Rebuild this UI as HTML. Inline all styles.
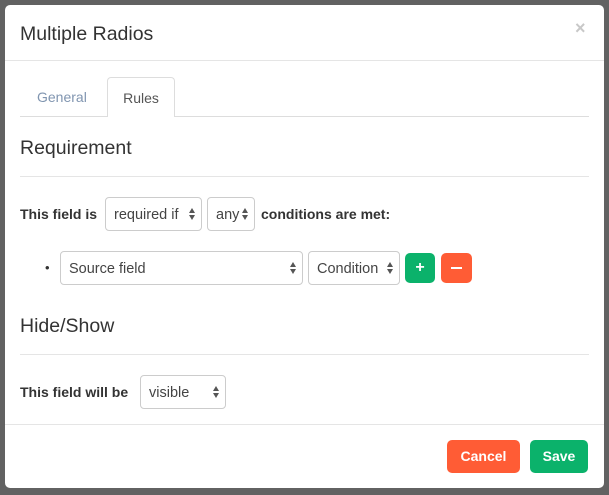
<!DOCTYPE html>
<html><head><style>
body{margin:0;width:609px;height:495px;background:#626262;font-family:"Liberation Sans",sans-serif;position:relative;overflow:hidden;color:#333}
.m{position:absolute;left:5px;top:5px;width:599px;height:483px;background:#fff;border-radius:5px}
.a{position:absolute;white-space:nowrap}
.hr{position:absolute;height:1px;background:#e5e5e5}
.sel{position:absolute;border:1px solid #ccc;border-radius:4px;box-sizing:border-box;font-size:14.5px;color:#444;padding-left:8px;line-height:34px;white-space:nowrap}
.sel:after{content:"";position:absolute;right:6px;top:10px;border:3.5px solid transparent;border-bottom:5px solid #555;border-top:0}
.sel:before{content:"";position:absolute;right:6px;top:17px;border:3.5px solid transparent;border-top:5px solid #555;border-bottom:0}
b{font-size:14px;color:#333}
.h{font-size:19.5px;color:#333}
.btn{position:absolute;border-radius:5px;color:#fff;font-weight:bold;font-size:14px;text-align:center;line-height:32px}
</style></head><body>
<div class="m">
<div class="a h" style="left:15px;top:18px">Multiple Radios</div>
<div class="a" style="left:570px;top:13px;font-size:18px;color:#c8c8c8;font-weight:bold">×</div>
<div class="hr" style="left:0;right:0;top:55px"></div>
<div class="hr" style="left:15px;right:15px;top:111px;background:#ddd"></div>
<div class="a" style="left:32px;top:84px;font-size:14px;color:#8095b0">General</div>
<div class="a" style="left:102px;top:72px;width:68px;height:40px;border:1px solid #ddd;border-bottom:none;border-radius:4px 4px 0 0;background:#fff;box-sizing:border-box;font-size:14px;color:#555;text-align:center;line-height:40px">Rules</div>
<div class="a h" style="left:15px;top:132px">Requirement</div>
<div class="hr" style="left:15px;right:15px;top:171px"></div>
<b class="a" style="left:15px;top:201px">This field is</b>
<div class="sel" style="left:100px;top:192px;width:97px;height:34px">required if</div>
<div class="sel" style="left:202px;top:192px;width:48px;height:34px">any</div>
<b class="a" style="left:256px;top:201px">conditions are met:</b>
<div class="a" style="left:40px;top:255px;font-size:13px">•</div>
<div class="sel" style="left:55px;top:246px;width:243px;height:34px">Source field</div>
<div class="sel" style="left:303px;top:246px;width:92px;height:34px">Condition</div>
<div class="btn" style="left:400px;top:248px;width:30px;height:30px;background:#0bb26b;line-height:29px;font-size:16px">+</div>
<div class="btn" style="left:436px;top:248px;width:31px;height:30px;background:#ff5c35"><div style="position:absolute;left:10px;top:14px;width:11px;height:2px;background:#fff"></div></div>
<div class="a h" style="left:15px;top:310px">Hide/Show</div>
<div class="hr" style="left:15px;right:15px;top:349px"></div>
<b class="a" style="left:15px;top:379px">This field will be</b>
<div class="sel" style="left:135px;top:370px;width:86px;height:34px">visible</div>
<div class="hr" style="left:0;right:0;top:419px"></div>
<div class="btn" style="left:442px;top:435px;width:73px;height:33px;background:#ff5c35">Cancel</div>
<div class="btn" style="left:525px;top:435px;width:58px;height:33px;background:#0bb26b">Save</div>
</div>
</body></html>
